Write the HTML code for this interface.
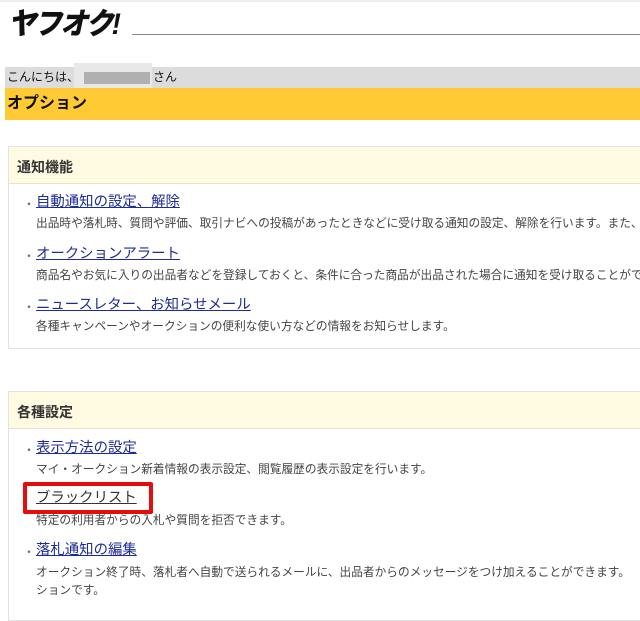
<!DOCTYPE html>
<html><head><meta charset="utf-8"><style>
*{margin:0;padding:0;box-sizing:border-box}
body{width:640px;height:609px;overflow:hidden;background:#fff;position:relative;font-family:"Liberation Sans","Noto Sans CJK JP",sans-serif;color:#333}
.a{position:absolute;white-space:nowrap}
.lk{font-size:14.4px;color:#1d2c98;text-decoration:underline;line-height:18px}
.d{font-size:11.7px;color:#444;line-height:14px}
.b{font-size:12px;color:#666;line-height:14px}
.box{position:absolute;left:8px;width:650px;border:1px solid #e2e2e2;background:#fff}
.hd{height:37px;background:#fffbe3;border-bottom:1px solid #e6e2cc;font-size:14px;font-weight:bold;color:#333;padding:10px 0 0 8px}
</style></head><body>
<div style="position:absolute;left:0;top:0;width:640px;height:2px;background:#eee"></div>
<div class="a" style="left:8px;top:6px;font-size:30px;font-weight:900;font-style:italic;color:#111;letter-spacing:-2px;line-height:38px;transform:scaleX(0.93);transform-origin:left">ヤフオク!</div>
<div style="position:absolute;left:132px;top:34px;width:508px;height:1px;background:#888"></div>
<div style="position:absolute;left:5px;top:67px;width:635px;height:21px;background:#dcdcdc"></div>
<div class="a" style="left:7px;top:70px;font-size:12px;color:#111;line-height:15px">こんにちは、</div>
<div style="position:absolute;left:74px;top:63px;width:78px;height:27px;background:#e8e8e8"></div>
<div style="position:absolute;left:84px;top:72px;width:66px;height:12px;background:#b0b0b0"></div>
<div class="a" style="left:153px;top:70px;font-size:12px;color:#111;line-height:15px">さん</div>
<div style="position:absolute;left:5px;top:88px;width:635px;height:32px;background:#ffca33"></div>
<div class="a" style="left:7px;top:94px;font-size:16px;font-weight:bold;color:#111;line-height:20px">オプション</div>

<div class="box" style="top:146px;height:203px"><div class="hd">通知機能</div></div>
<div class="a b" style="left:23px;top:197px">・</div>
<div class="a lk" style="left:36px;top:193px">自動通知の設定、解除</div>
<div class="a d" style="left:36px;top:217px">出品時や落札時、質問や評価、取引ナビへの投稿があったときなどに受け取る通知の設定、解除を行います。また、</div>
<div class="a b" style="left:23px;top:249px">・</div>
<div class="a lk" style="left:36px;top:245px">オークションアラート</div>
<div class="a d" style="left:36px;top:269px">商品名やお気に入りの出品者などを登録しておくと、条件に合った商品が出品された場合に通知を受け取ることがで</div>
<div class="a b" style="left:23px;top:300px">・</div>
<div class="a lk" style="left:36px;top:296px">ニュースレター、お知らせメール</div>
<div class="a d" style="left:36px;top:320px">各種キャンペーンやオークションの便利な使い方などの情報をお知らせします。</div>

<div class="box" style="top:391px;height:230px"><div class="hd">各種設定</div></div>
<div class="a b" style="left:23px;top:443px">・</div>
<div class="a lk" style="left:36px;top:439px">表示方法の設定</div>
<div class="a d" style="left:36px;top:463px">マイ・オークション新着情報の表示設定、閲覧履歴の表示設定を行います。</div>
<div class="a lk" style="left:36px;top:489px;color:#333">ブラックリスト</div>
<div style="position:absolute;left:23px;top:482px;width:130px;height:32px;border:4px solid #e30d0d;border-radius:2px"></div>
<div class="a d" style="left:36px;top:514px">特定の利用者からの入札や質問を拒否できます。</div>
<div class="a b" style="left:23px;top:545px">・</div>
<div class="a lk" style="left:36px;top:541px">落札通知の編集</div>
<div class="a d" style="left:36px;top:566px">オークション終了時、落札者へ自動で送られるメールに、出品者からのメッセージをつけ加えることができます。</div>
<div class="a d" style="left:36px;top:584px">ションです。</div>
</body></html>
